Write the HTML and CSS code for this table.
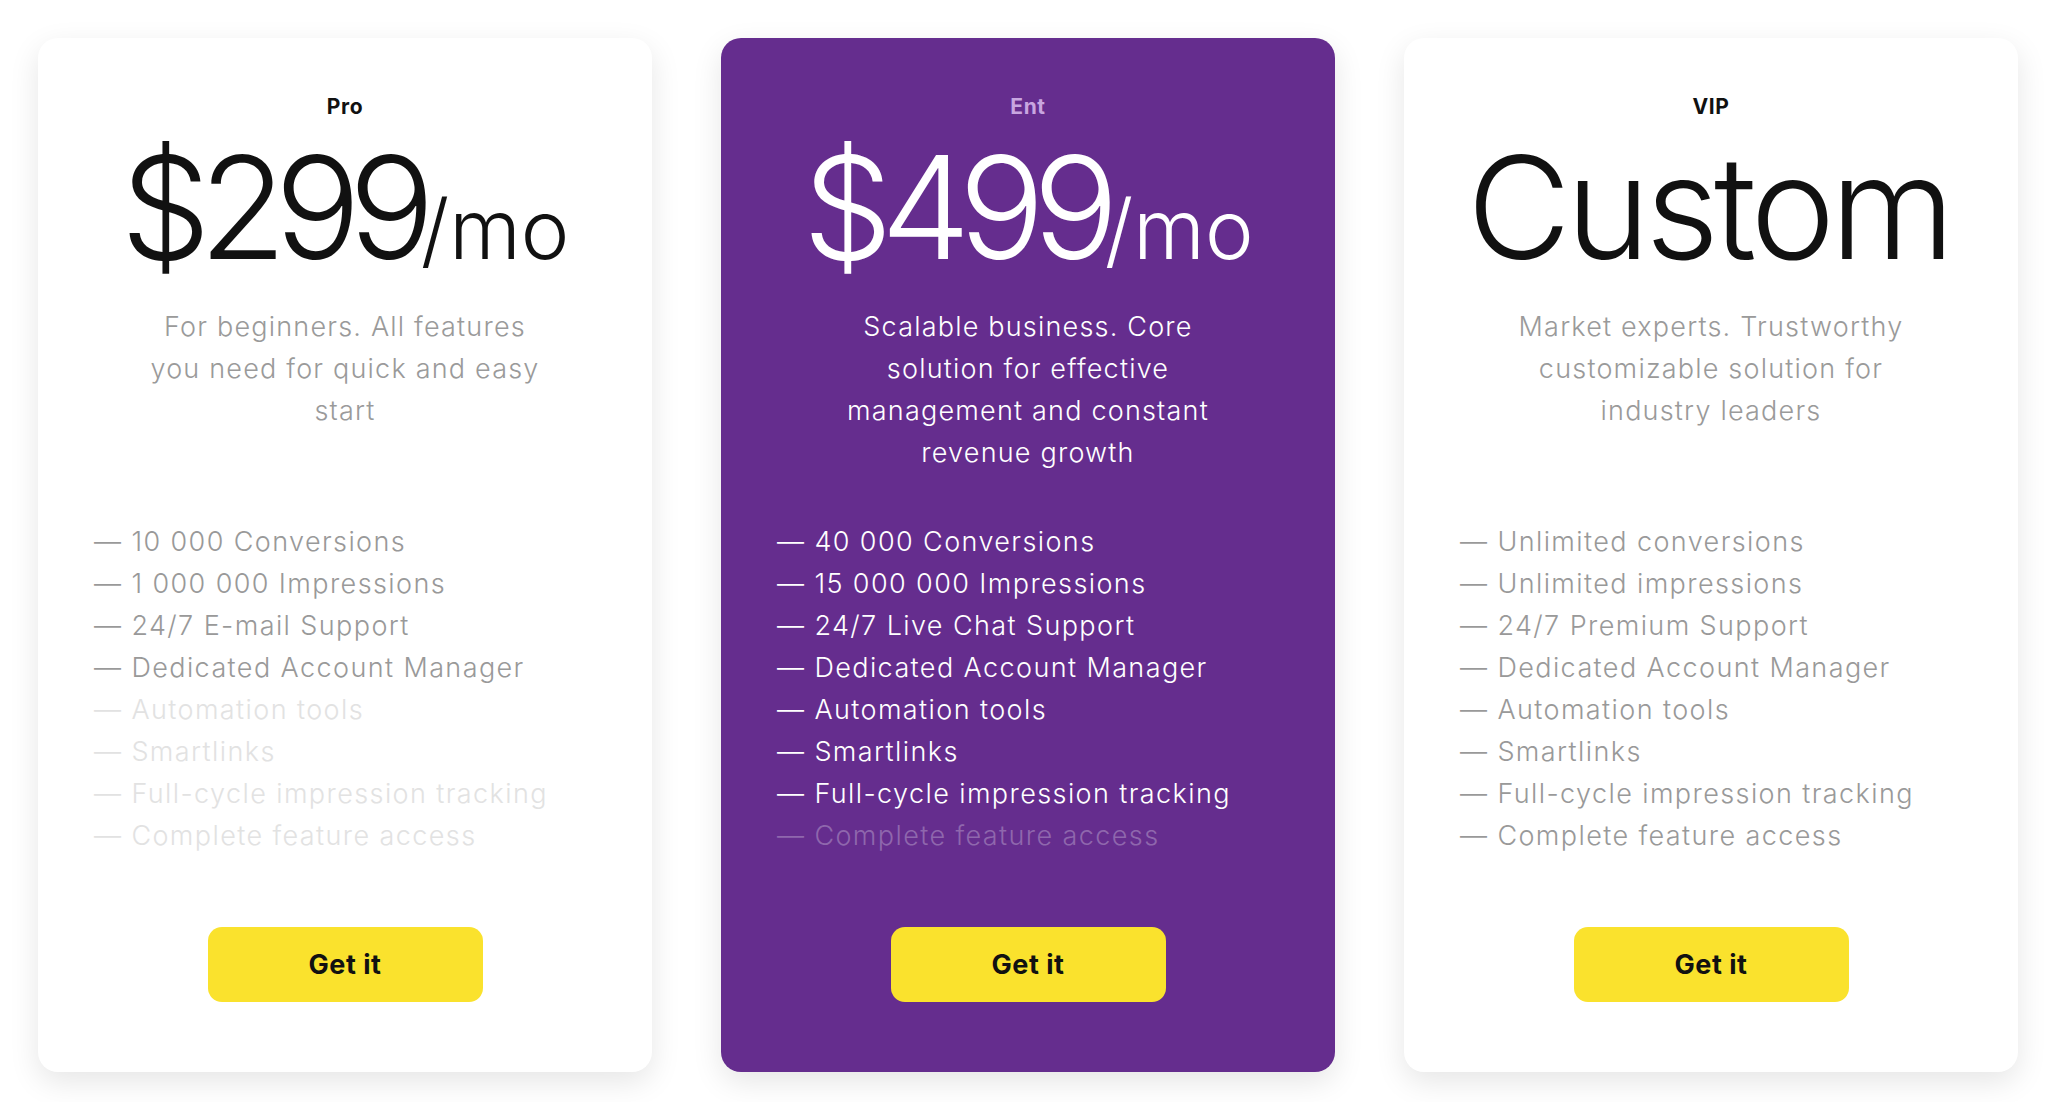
FILE: index.html
```html
<!DOCTYPE html>
<html lang="en">
<head>
<meta charset="utf-8">
<title>Pricing</title>
<link rel="stylesheet" href="styles.css">
</head>
<body>
<main class="plans">
  <section class="card">
    <div class="label">Pro</div>
    <div class="price"><span class="amount">$299</span><span class="per">/mo</span></div>
    <p class="desc">For beginners. All features<br>you need for quick and easy<br>start</p>
    <ul class="features">
      <li>— 10 000 Conversions</li>
      <li>— 1 000 000 Impressions</li>
      <li>— 24/7 E-mail Support</li>
      <li>— Dedicated Account Manager</li>
      <li class="off">— Automation tools</li>
      <li class="off">— Smartlinks</li>
      <li class="off">— Full-cycle impression tracking</li>
      <li class="off">— Complete feature access</li>
    </ul>
    <button class="btn">Get it</button>
  </section>
  <section class="card card--featured">
    <div class="label">Ent</div>
    <div class="price"><span class="amount">$499</span><span class="per">/mo</span></div>
    <p class="desc">Scalable business. Core<br>solution for effective<br>management and constant<br>revenue growth</p>
    <ul class="features">
      <li>— 40 000 Conversions</li>
      <li>— 15 000 000 Impressions</li>
      <li>— 24/7 Live Chat Support</li>
      <li>— Dedicated Account Manager</li>
      <li>— Automation tools</li>
      <li>— Smartlinks</li>
      <li>— Full-cycle impression tracking</li>
      <li class="off">— Complete feature access</li>
    </ul>
    <button class="btn">Get it</button>
  </section>
  <section class="card">
    <div class="label">VIP</div>
    <div class="price"><span class="amount amount--custom">Custom</span></div>
    <p class="desc">Market experts. Trustworthy<br>customizable solution for<br>industry leaders</p>
    <ul class="features">
      <li>— Unlimited conversions</li>
      <li>— Unlimited impressions</li>
      <li>— 24/7 Premium Support</li>
      <li>— Dedicated Account Manager</li>
      <li>— Automation tools</li>
      <li>— Smartlinks</li>
      <li>— Full-cycle impression tracking</li>
      <li>— Complete feature access</li>
    </ul>
    <button class="btn">Get it</button>
  </section>
</main>
</body>
</html>
```
FILE: styles.css
```css
* { box-sizing: border-box; }
html, body { margin: 0; padding: 0; background: #ffffff; }
body {
  font-family: "Inter", "Open Sans", sans-serif;
  color: #111;
}
.plans {
  display: flex;
  gap: 69px;
  padding: 38px 30px 30px 38px;
}
.card {
  width: 614px;
  height: 1034px;
  flex: none;
  background: #fff;
  border-radius: 20px;
  box-shadow: 0 10px 30px rgba(0, 0, 0, 0.10);
  display: flex;
  flex-direction: column;
  align-items: center;
  padding: 57px 56px 0;
}
.label {
  font-size: 21px;
  font-weight: 700;
  line-height: 24px;
  letter-spacing: 0.6px;
  color: #111;
}
.price {
  margin-top: 16px;
  height: 143px;
  display: flex;
  align-items: baseline;
  font-size: 143px;
  font-weight: 300;
  line-height: 143px;
  color: #111;
  white-space: nowrap;
}
.amount { letter-spacing: -12px; }
.amount--custom { letter-spacing: -5px; margin-right: 5px; }
.per {
  font-size: 82px;
  letter-spacing: 0;
  margin-left: -2px;
}
.desc {
  margin: 28px 0 0;
  height: 215px;
  font-size: 27px;
  font-weight: 300;
  line-height: 42px;
  letter-spacing: 1.2px;
  text-align: center;
  color: #9a9a9a;
}
.features {
  list-style: none;
  margin: 0;
  padding: 0;
  align-self: stretch;
  font-size: 27px;
  font-weight: 300;
  line-height: 42px;
  letter-spacing: 1.4px;
  color: #999;
}
.features .off { color: #e2e2e2; }
.btn {
  margin-top: 70px;
  width: 275px;
  height: 75px;
  border: 0;
  border-radius: 14px;
  background: #fae22d;
  font-family: inherit;
  font-size: 27px;
  font-weight: 700;
  letter-spacing: 0.5px;
  color: #111;
}
.card--featured { background: #652d8e; }
.card--featured .label { color: #c8a6e0; }
.card--featured .price { color: #fff; }
.card--featured .desc { color: #fff; }
.card--featured .features { color: #fff; }
.card--featured .features .off { color: #8f67ad; }
```
